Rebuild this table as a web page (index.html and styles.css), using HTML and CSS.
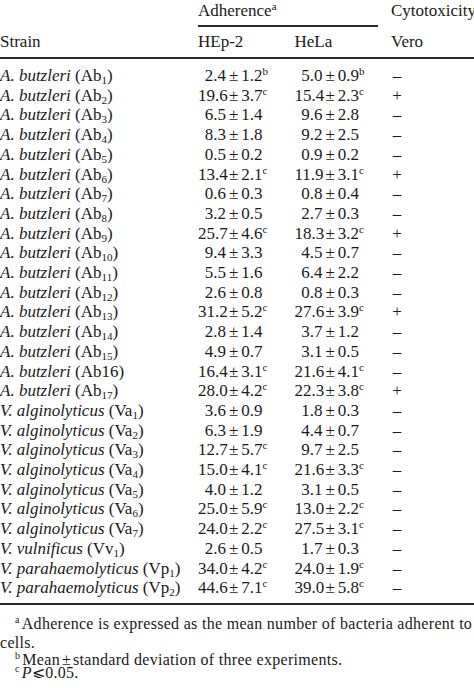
FILE: index.html
```html
<!DOCTYPE html>
<html lang="en">
<head>
<meta charset="utf-8">
<title>Adherence and cytotoxicity</title>
<link rel="stylesheet" href="styles.css">
</head>
<body>
<div class="page">
<table class="tbl">
<thead>
<tr class="h1">
<th class="c1"></th>
<th colspan="2" class="adh"><span class="adh-label">Adherence<sup>a</sup></span></th>
<th class="c4">Cytotoxicity</th>
</tr>
<tr class="h2">
<th class="c1">Strain</th>
<th class="c2">HEp-2</th>
<th class="c3">HeLa</th>
<th class="c4">Vero</th>
</tr>
</thead>
<tbody>
<tr><td class="c1"><i>A. butzleri</i> (Ab<sub>1</sub>)</td><td class="c2"><span class="l">2.4</span><span class="pm">±</span>1.2<sup>b</sup></td><td class="c3"><span class="l">5.0</span><span class="pm">±</span>0.9<sup>b</sup></td><td class="c4"><span class="s">–</span></td></tr>
<tr><td class="c1"><i>A. butzleri</i> (Ab<sub>2</sub>)</td><td class="c2"><span class="l">19.6</span><span class="pm">±</span>3.7<sup>c</sup></td><td class="c3"><span class="l">15.4</span><span class="pm">±</span>2.3<sup>c</sup></td><td class="c4"><span class="s">+</span></td></tr>
<tr><td class="c1"><i>A. butzleri</i> (Ab<sub>3</sub>)</td><td class="c2"><span class="l">6.5</span><span class="pm">±</span>1.4</td><td class="c3"><span class="l">9.6</span><span class="pm">±</span>2.8</td><td class="c4"><span class="s">–</span></td></tr>
<tr><td class="c1"><i>A. butzleri</i> (Ab<sub>4</sub>)</td><td class="c2"><span class="l">8.3</span><span class="pm">±</span>1.8</td><td class="c3"><span class="l">9.2</span><span class="pm">±</span>2.5</td><td class="c4"><span class="s">–</span></td></tr>
<tr><td class="c1"><i>A. butzleri</i> (Ab<sub>5</sub>)</td><td class="c2"><span class="l">0.5</span><span class="pm">±</span>0.2</td><td class="c3"><span class="l">0.9</span><span class="pm">±</span>0.2</td><td class="c4"><span class="s">–</span></td></tr>
<tr><td class="c1"><i>A. butzleri</i> (Ab<sub>6</sub>)</td><td class="c2"><span class="l">13.4</span><span class="pm">±</span>2.1<sup>c</sup></td><td class="c3"><span class="l">11.9</span><span class="pm">±</span>3.1<sup>c</sup></td><td class="c4"><span class="s">+</span></td></tr>
<tr><td class="c1"><i>A. butzleri</i> (Ab<sub>7</sub>)</td><td class="c2"><span class="l">0.6</span><span class="pm">±</span>0.3</td><td class="c3"><span class="l">0.8</span><span class="pm">±</span>0.4</td><td class="c4"><span class="s">–</span></td></tr>
<tr><td class="c1"><i>A. butzleri</i> (Ab<sub>8</sub>)</td><td class="c2"><span class="l">3.2</span><span class="pm">±</span>0.5</td><td class="c3"><span class="l">2.7</span><span class="pm">±</span>0.3</td><td class="c4"><span class="s">–</span></td></tr>
<tr><td class="c1"><i>A. butzleri</i> (Ab<sub>9</sub>)</td><td class="c2"><span class="l">25.7</span><span class="pm">±</span>4.6<sup>c</sup></td><td class="c3"><span class="l">18.3</span><span class="pm">±</span>3.2<sup>c</sup></td><td class="c4"><span class="s">+</span></td></tr>
<tr><td class="c1"><i>A. butzleri</i> (Ab<sub>10</sub>)</td><td class="c2"><span class="l">9.4</span><span class="pm">±</span>3.3</td><td class="c3"><span class="l">4.5</span><span class="pm">±</span>0.7</td><td class="c4"><span class="s">–</span></td></tr>
<tr><td class="c1"><i>A. butzleri</i> (Ab<sub>11</sub>)</td><td class="c2"><span class="l">5.5</span><span class="pm">±</span>1.6</td><td class="c3"><span class="l">6.4</span><span class="pm">±</span>2.2</td><td class="c4"><span class="s">–</span></td></tr>
<tr><td class="c1"><i>A. butzleri</i> (Ab<sub>12</sub>)</td><td class="c2"><span class="l">2.6</span><span class="pm">±</span>0.8</td><td class="c3"><span class="l">0.8</span><span class="pm">±</span>0.3</td><td class="c4"><span class="s">–</span></td></tr>
<tr><td class="c1"><i>A. butzleri</i> (Ab<sub>13</sub>)</td><td class="c2"><span class="l">31.2</span><span class="pm">±</span>5.2<sup>c</sup></td><td class="c3"><span class="l">27.6</span><span class="pm">±</span>3.9<sup>c</sup></td><td class="c4"><span class="s">+</span></td></tr>
<tr><td class="c1"><i>A. butzleri</i> (Ab<sub>14</sub>)</td><td class="c2"><span class="l">2.8</span><span class="pm">±</span>1.4</td><td class="c3"><span class="l">3.7</span><span class="pm">±</span>1.2</td><td class="c4"><span class="s">–</span></td></tr>
<tr><td class="c1"><i>A. butzleri</i> (Ab<sub>15</sub>)</td><td class="c2"><span class="l">4.9</span><span class="pm">±</span>0.7</td><td class="c3"><span class="l">3.1</span><span class="pm">±</span>0.5</td><td class="c4"><span class="s">–</span></td></tr>
<tr><td class="c1"><i>A. butzleri</i> (Ab16)</td><td class="c2"><span class="l">16.4</span><span class="pm">±</span>3.1<sup>c</sup></td><td class="c3"><span class="l">21.6</span><span class="pm">±</span>4.1<sup>c</sup></td><td class="c4"><span class="s">–</span></td></tr>
<tr><td class="c1"><i>A. butzleri</i> (Ab<sub>17</sub>)</td><td class="c2"><span class="l">28.0</span><span class="pm">±</span>4.2<sup>c</sup></td><td class="c3"><span class="l">22.3</span><span class="pm">±</span>3.8<sup>c</sup></td><td class="c4"><span class="s">+</span></td></tr>
<tr><td class="c1"><i>V. alginolyticus</i> (Va<sub>1</sub>)</td><td class="c2"><span class="l">3.6</span><span class="pm">±</span>0.9</td><td class="c3"><span class="l">1.8</span><span class="pm">±</span>0.3</td><td class="c4"><span class="s">–</span></td></tr>
<tr><td class="c1"><i>V. alginolyticus</i> (Va<sub>2</sub>)</td><td class="c2"><span class="l">6.3</span><span class="pm">±</span>1.9</td><td class="c3"><span class="l">4.4</span><span class="pm">±</span>0.7</td><td class="c4"><span class="s">–</span></td></tr>
<tr><td class="c1"><i>V. alginolyticus</i> (Va<sub>3</sub>)</td><td class="c2"><span class="l">12.7</span><span class="pm">±</span>5.7<sup>c</sup></td><td class="c3"><span class="l">9.7</span><span class="pm">±</span>2.5</td><td class="c4"><span class="s">–</span></td></tr>
<tr><td class="c1"><i>V. alginolyticus</i> (Va<sub>4</sub>)</td><td class="c2"><span class="l">15.0</span><span class="pm">±</span>4.1<sup>c</sup></td><td class="c3"><span class="l">21.6</span><span class="pm">±</span>3.3<sup>c</sup></td><td class="c4"><span class="s">–</span></td></tr>
<tr><td class="c1"><i>V. alginolyticus</i> (Va<sub>5</sub>)</td><td class="c2"><span class="l">4.0</span><span class="pm">±</span>1.2</td><td class="c3"><span class="l">3.1</span><span class="pm">±</span>0.5</td><td class="c4"><span class="s">–</span></td></tr>
<tr><td class="c1"><i>V. alginolyticus</i> (Va<sub>6</sub>)</td><td class="c2"><span class="l">25.0</span><span class="pm">±</span>5.9<sup>c</sup></td><td class="c3"><span class="l">13.0</span><span class="pm">±</span>2.2<sup>c</sup></td><td class="c4"><span class="s">–</span></td></tr>
<tr><td class="c1"><i>V. alginolyticus</i> (Va<sub>7</sub>)</td><td class="c2"><span class="l">24.0</span><span class="pm">±</span>2.2<sup>c</sup></td><td class="c3"><span class="l">27.5</span><span class="pm">±</span>3.1<sup>c</sup></td><td class="c4"><span class="s">–</span></td></tr>
<tr><td class="c1"><i>V. vulnificus</i> (Vv<sub>1</sub>)</td><td class="c2"><span class="l">2.6</span><span class="pm">±</span>0.5</td><td class="c3"><span class="l">1.7</span><span class="pm">±</span>0.3</td><td class="c4"><span class="s">–</span></td></tr>
<tr><td class="c1"><i>V. parahaemolyticus</i> (Vp<sub>1</sub>)</td><td class="c2"><span class="l">34.0</span><span class="pm">±</span>4.2<sup>c</sup></td><td class="c3"><span class="l">24.0</span><span class="pm">±</span>1.9<sup>c</sup></td><td class="c4"><span class="s">–</span></td></tr>
<tr><td class="c1"><i>V. parahaemolyticus</i> (Vp<sub>2</sub>)</td><td class="c2"><span class="l">44.6</span><span class="pm">±</span>7.1<sup>c</sup></td><td class="c3"><span class="l">39.0</span><span class="pm">±</span>5.8<sup>c</sup></td><td class="c4"><span class="s">–</span></td></tr>
</tbody>
</table>
<div class="notes">
<p class="n1"><sup>a</sup>Adherence is expressed as the mean number of bacteria adherent to cells.</p>
<p class="n2"><sup>b</sup>Mean<span class="pm">±</span>standard deviation of three experiments.</p>
<p class="n3"><sup>c</sup><i>P</i>⩽0.05.</p>
</div>
</div>
</body>
</html>
```
FILE: styles.css
```css
html, body {
  margin: 0;
  padding: 0;
  background: #fff;
}
body {
  overflow: hidden;
  font-family: "Liberation Serif", "Times New Roman", serif;
  color: #1a1a1a;
}
.page {
  width: 474px;
}
.tbl {
  width: 474px;
  border-collapse: separate;
  border-spacing: 0;
  font-size: 17px;
  table-layout: fixed;
}
.tbl th {
  font-weight: normal;
  text-align: left;
  padding: 0 0 0 4px;
  white-space: nowrap;
  overflow: visible;
}
.tbl th.c1, .tbl td.c1 {
  width: 194px;
  padding-left: 0;
}
.tbl th.c2, .tbl td.c2 { width: 90px; }
.tbl th.c3, .tbl td.c3 { width: 91px; }
.tbl th.c4, .tbl td.c4 { width: 83px; }
.h1 th {
  line-height: 22px;
  vertical-align: top;
  padding-bottom: 5px;
}
.adh .adh-label {
  display: block;
  margin-right: 9px;
  padding-bottom: 3px;
  border-bottom: 2px solid #2a2a2a;
}
.h1 th.adh { padding-bottom: 0; }
.h2 th {
  line-height: 30px;
  border-bottom: 2px solid #2a2a2a;
}
.tbl td {
  padding: 0 0 0 4px;
  line-height: 19.7px;
  white-space: nowrap;
  vertical-align: middle;
}
.tbl tbody tr:first-child td { padding-top: 7px; }
.tbl tbody tr:last-child td {
  padding-bottom: 5px;
  border-bottom: 2px solid #2a2a2a;
}
.tbl i { font-style: italic; }
sub, sup {
  line-height: 0;
  font-size: 11px;
}
sub { vertical-align: -3px; }
sup { vertical-align: 6px; }
.l {
  display: inline-block;
  text-align: right;
}
.c2 .l { width: 28px; }
.c3 .l { width: 28px; }
.pm {
  margin: 0 3px;
}
.s {
  display: inline-block;
  width: 12px;
  text-align: center;
}
.notes {
  padding-top: 9px;
  font-size: 16px;
  letter-spacing: 0.3px;
}
.notes p { margin: 0; }
.notes .pm { margin: 0 2px; }
.n1 {
  text-indent: 15px;
  line-height: 19px;
}
.n2 {
  text-indent: 15px;
  line-height: 15px;
}
.n3 {
  text-indent: 15px;
  line-height: 11px;
}
.notes sup { font-size: 10px; margin-right: 2px; }
```
